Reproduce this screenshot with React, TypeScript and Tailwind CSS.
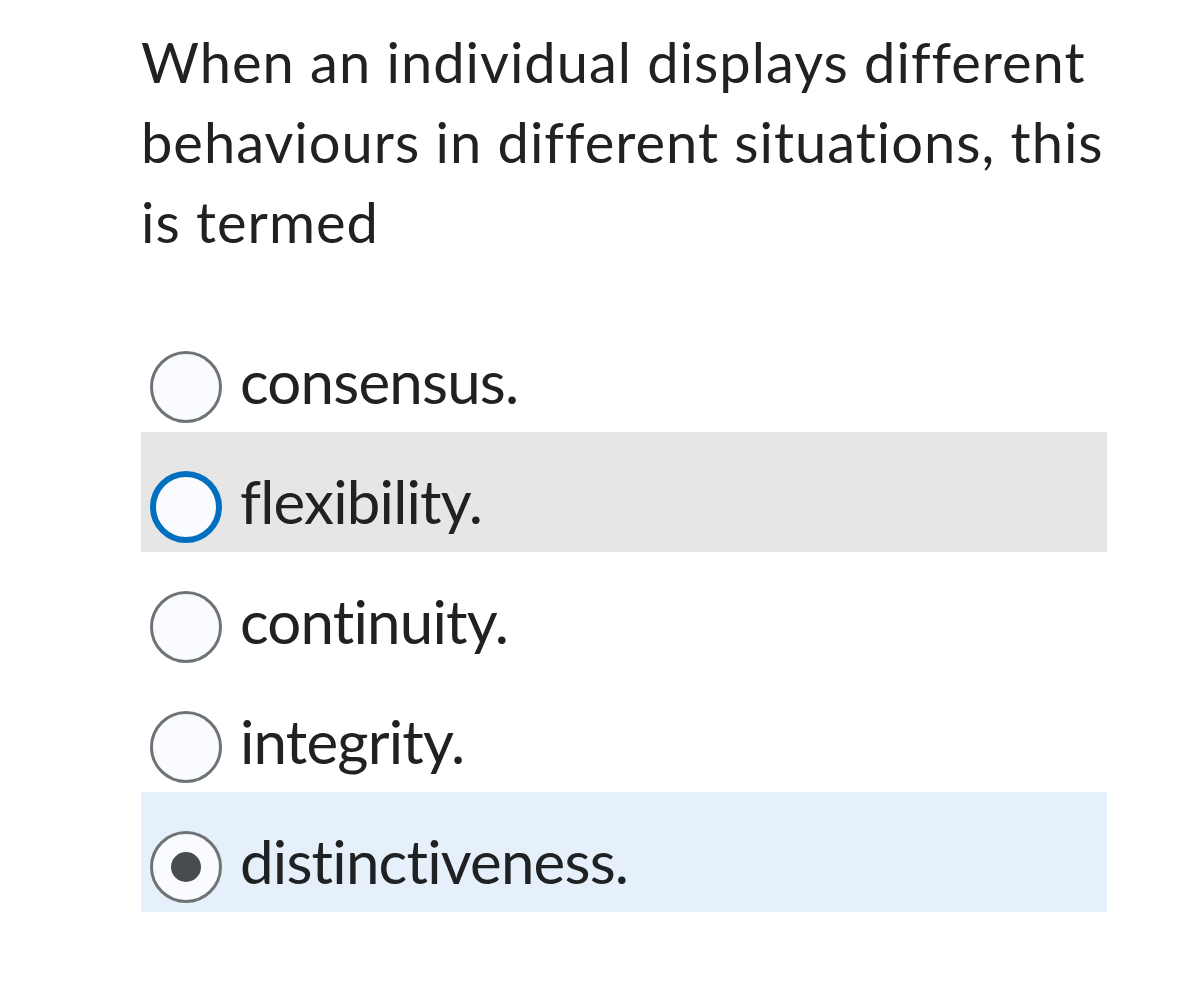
import React, { useState } from "react";

const options = ["consensus.", "flexibility.", "continuity.", "integrity.", "distinctiveness."];

function Radio({ checked, focused }: { checked: boolean; focused: boolean }) {
  return (
    <span
      className={`flex h-[72px] w-[72px] shrink-0 items-center justify-center rounded-full bg-[#f9fbff] ${
        focused ? "border-[6px] border-[#006fbf]" : "border-[3px] border-[#6e7376]"
      }`}
    >
      {checked && <span className="h-[30px] w-[30px] rounded-full bg-[#494c4e]" />}
    </span>
  );
}

export default function App() {
  const [selected, setSelected] = useState(4);
  const hovered = 1;

  return (
    <div className="min-h-screen bg-white font-['Lato',sans-serif] text-[#202122] [font-variant-ligatures:none]">
      <div className="ml-[141px] w-[966px] pt-[22px]">
        {/* question wraps a touch past the answer rows */}
        <p className="w-[985px] text-[56px] leading-[80px] tracking-[1px]">
          When an individual displays different behaviours in different situations, this is termed
        </p>

        <div className="mt-[50px]">
          {options.map((opt, i) => (
            <div
              key={opt}
              onClick={() => setSelected(i)}
              className={`flex h-[120px] cursor-pointer items-start pl-[9px] pt-[39px] ${
                i === selected ? "bg-[#e6f0fa]" : i === hovered ? "bg-[#e6e6e6]" : "bg-white"
              }`}
            >
              <div className="flex h-[72px] items-center gap-[18px]">
                <Radio checked={i === selected} focused={i === hovered} />
                <span className="-mt-[13px] text-[60px] leading-none tracking-[-0.8px]">{opt}</span>
              </div>
            </div>
          ))}
        </div>
      </div>
    </div>
  );
}
